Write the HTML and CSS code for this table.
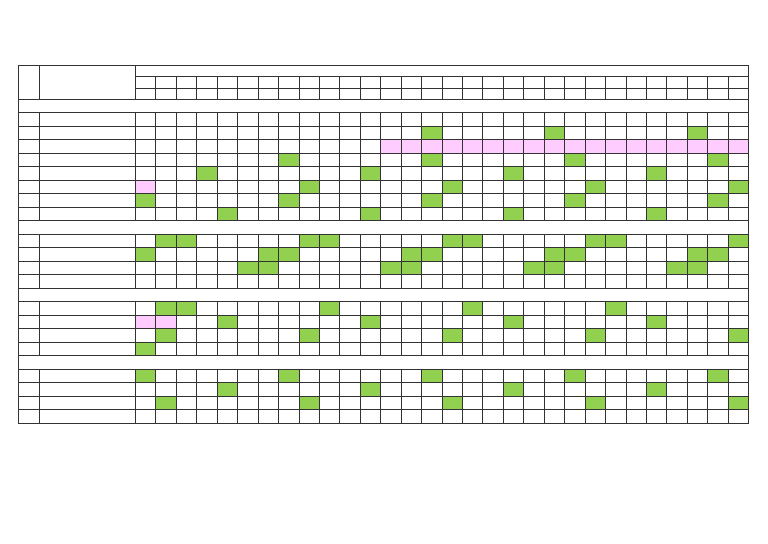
FILE: index.html
```html
<!DOCTYPE html>
<html lang="en">
<head>
    <meta charset="UTF-8">
    <meta name="viewport" content="width=device-width, initial-scale=1.0">
    <title>Schedule</title>
    <link rel="stylesheet" href="styles.css">
</head>
<body>

<table class="schedule">
    <colgroup id="cols">
        <col class="col-no">
        <col class="col-name">
    </colgroup>
    <thead id="head"></thead>
    <tbody id="body"></tbody>
</table>

<script>
    const DAYS = 30;

    function range(a, b) {
        const out = [];
        for (let i = a; i <= b; i++) out.push(i);
        return out;
    }

    // each group = list of rows, g = green days, p = pink days
    const groups = [
        [
            { g: [] },
            { g: [14, 20, 27] },
            { g: [], p: range(12, 29) },
            { g: [7, 14, 21, 28] },
            { g: [3, 11, 18, 25] },
            { g: [8, 15, 22, 29], p: [0] },
            { g: [0, 7, 14, 21, 28] },
            { g: [4, 11, 18, 25] }
        ],
        [
            { g: [1, 2, 8, 9, 15, 16, 22, 23, 29] },
            { g: [0, 6, 7, 13, 14, 20, 21, 27, 28] },
            { g: [5, 6, 12, 13, 19, 20, 26, 27] },
            { g: [] }
        ],
        [
            { g: [1, 2, 9, 16, 23] },
            { g: [4, 11, 18, 25], p: [0, 1] },
            { g: [1, 8, 15, 22, 29] },
            { g: [0] }
        ],
        [
            { g: [0, 7, 14, 21, 28] },
            { g: [4, 11, 18, 25] },
            { g: [1, 8, 15, 22, 29] },
            { g: [] }
        ]
    ];

    function cell(tr, cls, span) {
        const td = document.createElement('td');
        if (cls) td.className = cls;
        if (span) td.colSpan = span;
        tr.appendChild(td);
        return td;
    }

    function buildHead() {
        const cols = document.getElementById('cols');
        for (let i = 0; i < DAYS; i++) {
            const col = document.createElement('col');
            col.className = 'col-day';
            cols.appendChild(col);
        }

        const head = document.getElementById('head');
        const top = document.createElement('tr');
        top.className = 'head-row';
        cell(top).rowSpan = 3;
        cell(top).rowSpan = 3;
        cell(top, '', DAYS);
        head.appendChild(top);

        for (let r = 0; r < 2; r++) {
            const tr = document.createElement('tr');
            tr.className = 'head-row';
            for (let i = 0; i < DAYS; i++) cell(tr);
            head.appendChild(tr);
        }
    }

    function buildBody() {
        const body = document.getElementById('body');
        groups.forEach(rows => {
            const band = document.createElement('tr');
            band.className = 'band';
            cell(band, '', DAYS + 2);
            body.appendChild(band);

            rows.forEach(row => {
                const tr = document.createElement('tr');
                tr.className = 'row';
                cell(tr);
                cell(tr);
                for (let i = 0; i < DAYS; i++) {
                    let cls = '';
                    if (row.g.includes(i)) cls = 'green';
                    else if (row.p && row.p.includes(i)) cls = 'pink';
                    cell(tr, cls);
                }
                body.appendChild(tr);
            });
        });
    }

    buildHead();
    buildBody();
</script>

</body>
</html>
```

FILE: styles.css
```css
:root {
    --line: #333;
    --green: #92d050;
    --pink: #ffccff;
}

body {
    margin: 0;
    padding: 65px 0 0 18px;
    background-color: #fff;
    font-family: "Liberation Sans", Arial, sans-serif;
}

.schedule {
    border-collapse: collapse;
    table-layout: fixed;
    width: 731px;
}

.schedule td {
    border: 1px solid var(--line);
    padding: 0;
    font-size: 0;
    line-height: 0;
}

.col-no {
    width: 21px;
}

.col-name {
    width: 96px;
}

.col-day {
    width: 20.45px;
}

.head-row td {
    height: 10.3px;
}

.band td,
.row td {
    height: 12.5px;
}

.schedule td.green {
    background-color: var(--green);
}

.schedule td.pink {
    background-color: var(--pink);
}
```
